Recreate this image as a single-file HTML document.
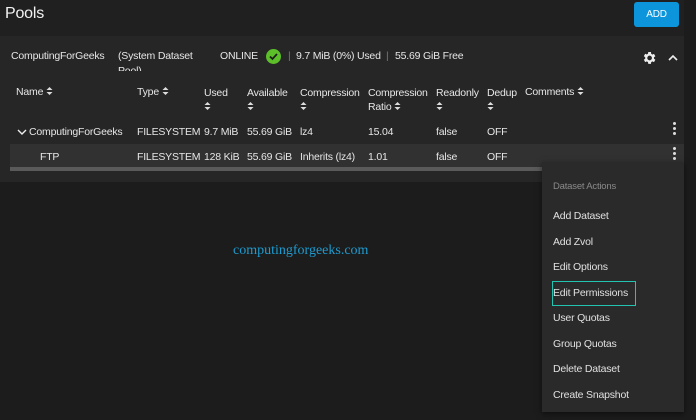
<!DOCTYPE html>
<html><head><meta charset="utf-8"><style>
*{margin:0;padding:0;box-sizing:border-box}
body{width:696px;height:420px;overflow:hidden;background:#1c1c1c;font-family:"Liberation Sans",sans-serif;color:#e6e6e6;font-size:10.5px;letter-spacing:-0.2px;position:relative}
.a{position:absolute;white-space:nowrap}
.card{position:absolute;left:0;top:36px;width:684px;height:146px;background:#262626}
.hl{position:absolute;left:10px;top:144px;width:674px;height:24px;background:#313131}
.sb{position:absolute;left:10px;top:167px;width:532px;height:4px;background:#5a5a5a}
.menu{position:absolute;left:542px;top:162px;width:142px;height:250px;background:#2a2a2a;box-shadow:0 2px 6px rgba(0,0,0,.5)}
.menu div{position:absolute;left:11px;font-size:10.5px;color:#e0e0e0}
.s{display:inline-block;width:7px;height:10px;vertical-align:-1px}
.dots{position:absolute;width:3px;height:3px;background:#ddd;border-radius:50%}
</style></head><body>
<svg width="0" height="0" style="position:absolute"><defs><symbol id="srt" viewBox="0 0 7 10"><path d="M0.5 4L3.5 1 6.5 4z M0.5 6L3.5 9 6.5 6z" fill="#ddd"/></symbol></defs></svg>
<div class="a" style="left:0;top:0;width:684px;height:36px;background:#202020"></div>
<div class="a" style="left:5px;top:5px;font-size:16px;color:#f2f2f2">Pools</div>
<div class="a" style="left:634px;top:2px;width:45px;height:25px;background:#0d95dc;border-radius:3px;color:#fff;font-size:10px;line-height:25px;text-align:center">ADD</div>
<div class="card"></div>
<div class="hl"></div>
<div class="sb"></div>
<div class="a" style="left:11px;top:50px">ComputingForGeeks</div>
<div class="a" style="left:118px;top:50px">(System Dataset</div>
<div class="a" style="left:118px;top:65px;height:6px;overflow:hidden">Pool)</div>
<div class="a" style="left:220px;top:50px">ONLINE</div>
<div class="a" style="left:266px;top:49px;width:15px;height:15px;border-radius:50%;background:#5cbf2a"><svg width="15" height="15"><path d="M4 7.5l2.5 2.5 4.5-5" stroke="#1e1e1e" stroke-width="1.8" fill="none"/></svg></div>
<div class="a" style="left:288px;top:50px;color:#777">|</div>
<div class="a" style="left:296px;top:50px">9.7 MiB (0%) Used</div>
<div class="a" style="left:386px;top:50px;color:#777">|</div>
<div class="a" style="left:395px;top:50px">55.69 GiB Free</div>
<div class="a" style="left:641px;top:50px"><svg width="16" height="16" viewBox="0 0 24 24"><path fill="#eee" d="M19.4 13a7.5 7.5 0 000-2l2.1-1.6-2-3.5-2.5 1a7.4 7.4 0 00-1.7-1L14.9 3h-4l-.4 2.7a7.4 7.4 0 00-1.7 1l-2.5-1-2 3.5L6.4 11a7.5 7.5 0 000 2l-2.1 1.6 2 3.5 2.5-1a7.4 7.4 0 001.7 1l.4 2.7h4l.4-2.7a7.4 7.4 0 001.7-1l2.5 1 2-3.5zM12.9 15.5a3.5 3.5 0 110-7 3.5 3.5 0 010 7z"/></svg></div>
<div class="a" style="left:668px;top:53px"><svg width="10" height="8"><path d="M1 6l4-4 4 4" stroke="#eee" stroke-width="1.6" fill="none"/></svg></div>
<div class="a" style="left:16px;top:86px">Name <svg class="s"><use href="#srt"/></svg></div>
<div class="a" style="left:137px;top:86px">Type <svg class="s"><use href="#srt"/></svg></div>
<div class="a" style="left:204px;top:86px;line-height:14px">Used<br><svg class="s"><use href="#srt"/></svg></div>
<div class="a" style="left:247px;top:86px;line-height:14px">Available<br><svg class="s"><use href="#srt"/></svg></div>
<div class="a" style="left:300px;top:86px;line-height:14px">Compression<br><svg class="s"><use href="#srt"/></svg></div>
<div class="a" style="left:368px;top:86px;line-height:14px">Compression<br>Ratio <svg class="s"><use href="#srt"/></svg></div>
<div class="a" style="left:436px;top:86px;line-height:14px">Readonly<br><svg class="s"><use href="#srt"/></svg></div>
<div class="a" style="left:487px;top:86px;line-height:14px">Dedup<br><svg class="s"><use href="#srt"/></svg></div>
<div class="a" style="left:525px;top:86px">Comments <svg class="s"><use href="#srt"/></svg></div>
<div class="a" style="left:17px;top:127px"><svg width="10" height="8"><path d="M1 2l4 4 4-4" stroke="#eee" stroke-width="1.4" fill="none"/></svg></div>
<div class="a" style="left:29px;top:126px">ComputingForGeeks</div>
<div class="a" style="left:137px;top:126px">FILESYSTEM</div>
<div class="a" style="left:204px;top:126px">9.7 MiB</div>
<div class="a" style="left:247px;top:126px">55.69 GiB</div>
<div class="a" style="left:300px;top:126px">lz4</div>
<div class="a" style="left:368px;top:126px">15.04</div>
<div class="a" style="left:436px;top:126px">false</div>
<div class="a" style="left:487px;top:126px">OFF</div>
<div class="a" style="left:40px;top:151px">FTP</div>
<div class="a" style="left:137px;top:151px">FILESYSTEM</div>
<div class="a" style="left:204px;top:151px">128 KiB</div>
<div class="a" style="left:247px;top:151px">55.69 GiB</div>
<div class="a" style="left:300px;top:151px">Inherits (lz4)</div>
<div class="a" style="left:368px;top:151px">1.01</div>
<div class="a" style="left:436px;top:151px">false</div>
<div class="a" style="left:487px;top:151px">OFF</div>
<div class="dots" style="left:673px;top:122px"></div><div class="dots" style="left:673px;top:127px"></div><div class="dots" style="left:673px;top:132px"></div>
<div class="dots" style="left:673px;top:147px"></div><div class="dots" style="left:673px;top:152px"></div><div class="dots" style="left:673px;top:157px"></div>
<div class="a" style="left:233px;top:243px;font-family:'Liberation Serif',serif;font-size:14px;letter-spacing:0;color:#1e9bd0">computingforgeeks.com</div>
<div class="menu">
<div style="top:19px;font-size:9.5px;color:#8a8a8a">Dataset Actions</div>
<div style="top:48px">Add Dataset</div>
<div style="top:74px">Add Zvol</div>
<div style="top:99px">Edit Options</div>
<div style="top:125px">Edit Permissions</div>
<div style="top:150px">User Quotas</div>
<div style="top:176px">Group Quotas</div>
<div style="top:201px">Delete Dataset</div>
<div style="top:227px">Create Snapshot</div>
</div>
<div class="a" style="left:552px;top:281px;width:84px;height:25px;border:1.5px solid #22c3b0"></div>
</body></html>
